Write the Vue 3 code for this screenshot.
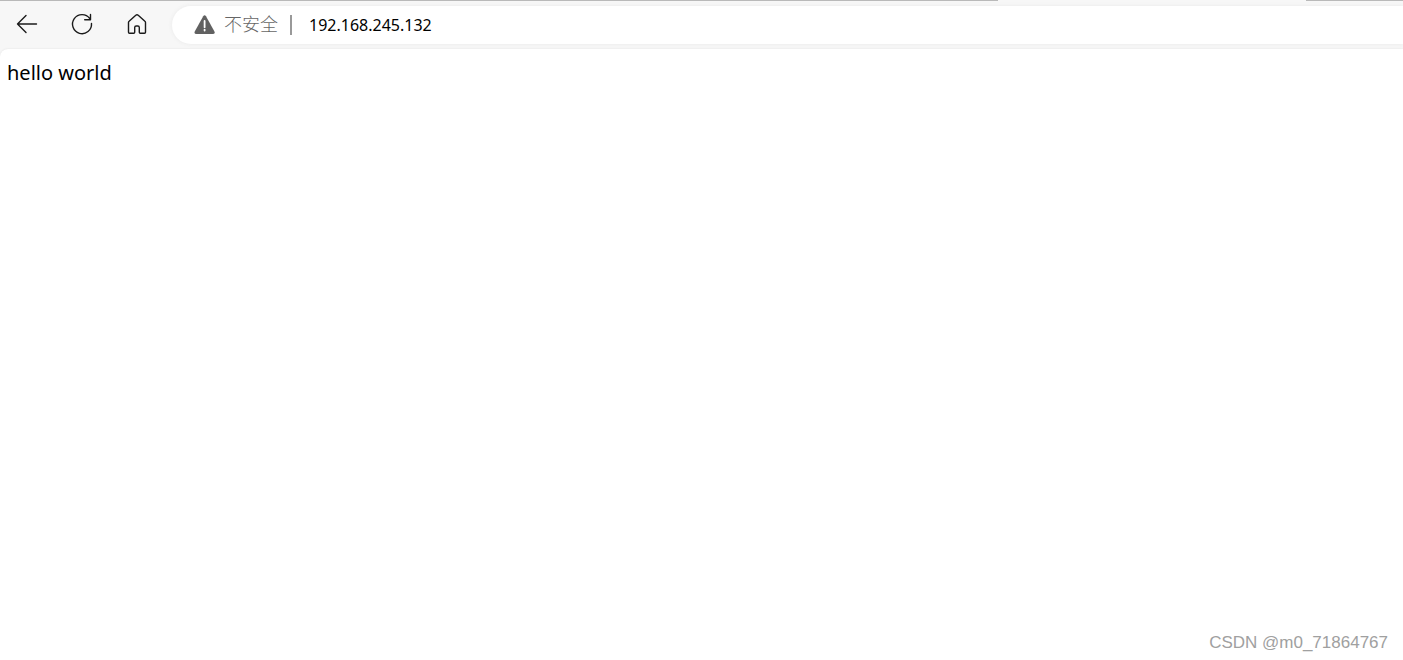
<script setup>
import { ref } from 'vue'

const address = ref('192.168.245.132')
const page = { message: 'hello world', credit: 'CSDN @m0_71864767' }
</script>

<template>
  <div class="browser">
    <div class="tab-edge"><span class="edge-left"></span><span class="edge-right"></span></div>
    <header class="toolbar">
      <nav class="controls">
        <button type="button" aria-label="返回">
          <svg viewBox="0 0 24 24"><path d="M21.500 12H2.500M11 3.500L2.500 12l8.500 8.500" /></svg>
        </button>
        <button type="button" aria-label="刷新">
          <svg viewBox="0 0 24 24"><path d="M21.500 11.500A9.500 9.500 0 1 1 19.800 6.700M20.500 2.500v5.300h-5.800" /></svg>
        </button>
        <button type="button" aria-label="主页">
          <svg viewBox="0 0 24 24"><path d="M4.500 21.200h4.200q1 0 1-1v-4.700q0-1.500 1.500-1.500h1.600q1.500 0 1.500 1.500v4.700q0 1 1 1h4.200q1 0 1-1V10.600q0-.8-.6-1.300l-6.700-6.100q-1.200-1.100-2.400 0L4.100 9.300q-.6.5-.6 1.300v9.600q0 1 1 1z" /></svg>
        </button>
      </nav>
      <div class="address-bar">
        <button type="button" class="security">
          <svg class="warning" viewBox="0 0 22 20">
            <path class="triangle" d="M9.200 1.300q1.400-2.200 2.800 0l8.300 15q1.300 2.700-1.600 2.700H2.500Q-.4 19 .9 16.300z" />
            <path class="mark" d="M10.600 6v6.200M10.600 14.600v1" />
          </svg>
          <span class="security-label">不安全</span>
        </button>
        <span class="divider"></span>
        <input v-model="address" type="text" aria-label="地址" spellcheck="false" />
      </div>
    </header>
    <main class="page">
      <p class="message">{{ page.message }}</p>
      <footer class="credit">{{ page.credit }}</footer>
    </main>
  </div>
</template>

<style>
body {
  margin: 0;
  background: #fff;
}
</style>

<style scoped>
.browser {
  display: flex;
  flex-direction: column;
  min-height: 100vh;
  background: #f7f7f7;
  font-family: "Noto Sans", "Noto Sans CJK SC", sans-serif;
}
.tab-edge {
  display: flex;
  justify-content: space-between;
  height: 1px;
}
.edge-left {
  width: 71.1%;
  background: #b9b9b9;
}
.edge-right {
  width: 6.9%;
  background: #b9b9b9;
}
.toolbar {
  display: flex;
  height: 48px;
  box-sizing: border-box;
  padding: 5px 0;
}
.controls {
  display: flex;
  align-items: center;
  gap: 31px;
  padding: 0 23px 2px 15px;
}
button {
  border: 0;
  padding: 0;
  background: none;
  font: inherit;
}
.controls button {
  width: 24px;
  height: 24px;
}
svg {
  display: block;
  width: 24px;
  height: 24px;
  fill: none;
  stroke: #1b1b1b;
  stroke-width: 1.4;
  stroke-linecap: round;
  stroke-linejoin: round;
}
.address-bar {
  display: flex;
  flex: 1;
  align-items: center;
  padding-left: 22px;
  border-radius: 19px 0 0 19px;
  background: #fff;
  box-shadow: 0 0 4px #e9e9e9;
}
.security {
  display: flex;
  align-items: center;
  gap: 8px;
  color: #666;
  font-family: "Noto Sans CJK SC", sans-serif;
  font-size: 18px;
  font-weight: 300;
  line-height: 24px;
}
.security-label {
  padding-bottom: 4px;
}
.warning {
  width: 22px;
  height: 20px;
}
.triangle {
  fill: #616161;
  stroke: none;
}
.mark {
  stroke: #fff;
  stroke-width: 1.8;
}
.divider {
  width: 2px;
  height: 20px;
  margin: 0 17px 0 12px;
  background: #999;
}
input {
  flex: 1;
  min-width: 0;
  border: 0;
  padding: 0;
  outline: 0;
  background: none;
  color: #000;
  font-family: "Noto Sans", sans-serif;
  font-size: 16px;
  line-height: 24px;
}
.page {
  display: flex;
  flex: 1;
  flex-direction: column;
  justify-content: space-between;
  padding: 9px 15px 5px 7px;
  border-radius: 8px 0 0 0;
  background: #fff;
  box-shadow: 0 0 2px #ddd;
}
.message {
  margin: 0;
  color: #000;
  font-size: 20px;
  line-height: 30px;
}
.credit {
  align-self: flex-end;
  color: #a0a0a0;
  font-family: "Liberation Sans", Arial, sans-serif;
  font-size: 17px;
  line-height: 24px;
}
</style>
